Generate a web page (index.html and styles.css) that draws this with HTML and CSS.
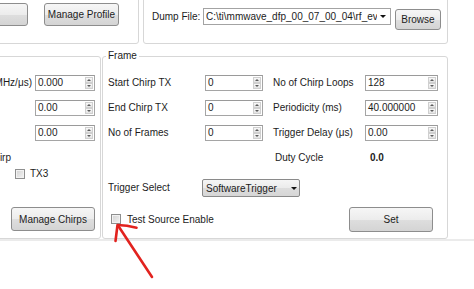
FILE: index.html
```html
<!DOCTYPE html>
<html>
<head>
<meta charset="utf-8">
<link rel="stylesheet" href="styles.css">
</head>
<body>
<div class="screen">
  <div class="top">
    <div class="group profile">
      <button class="btn btn-load">Load</button>
      <button class="btn btn-manage">Manage Profile</button>
    </div>
    <div class="group dump">
      <span class="dump-label">Dump File:</span>
      <div class="combo path"><span class="combo-text">C:\ti\mmwave_dfp_00_07_00_04\rf_ev</span><span class="caret"></span></div>
      <button class="btn btn-browse">Browse</button>
    </div>
  </div>

  <div class="main">
    <div class="panel chirp">
      <div class="spin-grid">
        <span class="lbl lbl-right">(MHz/μs)</span>
        <div class="spin"><span class="val">0.000</span><span class="arrows"><span class="up"></span><span class="dn"></span></span></div>
        <span class="lbl"></span>
        <div class="spin"><span class="val">0.00</span><span class="arrows"><span class="up"></span><span class="dn"></span></span></div>
        <span class="lbl"></span>
        <div class="spin"><span class="val">0.00</span><span class="arrows"><span class="up"></span><span class="dn"></span></span></div>
      </div>
      <div class="sub-head">Chirp</div>
      <div class="tx-row"><label class="check"><span class="box"></span>TX3</label></div>
      <div class="btn-row"><button class="btn btn-chirps">Manage Chirps</button></div>
    </div>

    <fieldset class="frame">
      <legend>Frame</legend>
      <div class="frame-grid">
        <span class="lbl">Start Chirp TX</span>
        <div class="spin"><span class="val">0</span><span class="arrows"><span class="up"></span><span class="dn"></span></span></div>
        <span class="lbl lbl2">No of Chirp Loops</span>
        <div class="spin"><span class="val">128</span><span class="arrows"><span class="up"></span><span class="dn"></span></span></div>

        <span class="lbl">End Chirp TX</span>
        <div class="spin"><span class="val">0</span><span class="arrows"><span class="up"></span><span class="dn"></span></span></div>
        <span class="lbl lbl2">Periodicity (ms)</span>
        <div class="spin"><span class="val">40.000000</span><span class="arrows"><span class="up"></span><span class="dn"></span></span></div>

        <span class="lbl">No of Frames</span>
        <div class="spin"><span class="val">0</span><span class="arrows"><span class="up"></span><span class="dn"></span></span></div>
        <span class="lbl lbl2">Trigger Delay (μs)</span>
        <div class="spin"><span class="val">0.00</span><span class="arrows"><span class="up"></span><span class="dn"></span></span></div>

        <span class="duty-lbl">Duty Cycle</span>
        <span class="duty-val">0.0</span>

        <span class="lbl trig-lbl">Trigger Select</span>
        <div class="select"><span>SoftwareTrigger</span><span class="caret"></span></div>

        <label class="check test"><span class="box"></span>Test Source Enable</label>
        <button class="btn btn-set">Set</button>
      </div>
    </fieldset>
  </div>

  <svg class="arrow" width="474" height="289" viewBox="0 0 474 289">
    <path d="M152 277 L119 227" stroke="#e2231f" stroke-width="2.6" stroke-linecap="round" fill="none"/>
    <path d="M115.5 241 L117.5 225 L127 225.8 L136.5 227.8" stroke="#e2231f" stroke-width="2.6" stroke-linecap="round" stroke-linejoin="round" fill="none"/>
  </svg>
</div>
</body>
</html>
```

FILE: styles.css
```css
html, body {
  margin: 0;
  padding: 0;
}

body {
  font-family: "Liberation Sans", Arial, sans-serif;
  font-size: 10px;
  color: #1c1c1c;
  background: #ffffff;
}

.screen {
  position: relative;
  width: 474px;
  height: 289px;
  overflow: hidden;
  background: #ffffff;
}

/* ---------- top row ---------- */
.top {
  display: flex;
  gap: 4px;
  margin-top: -20px;
  height: 64px;
}

.group {
  box-sizing: border-box;
  height: 64px;
  border: 1px solid #d7d7d7;
  border-radius: 3px;
  display: flex;
  align-items: flex-start;
}

.profile {
  width: 239px;
  margin-left: -100px;
  padding: 22px 0 0 15px;
  gap: 16px;
}

.dump {
  width: 305px;
  padding: 27px 0 0 8px;
}

.dump-label {
  width: 51px;
  line-height: 17px;
  white-space: nowrap;
}

.btn {
  box-sizing: border-box;
  font: inherit;
  color: #1c1c1c;
  border: 1px solid #8d8d8d;
  border-radius: 3px;
  background: linear-gradient(#f6f6f6 0%, #ececec 50%, #dedede 51%, #d4d4d4 100%);
  padding: 0;
  margin: 0;
  white-space: nowrap;
}

.btn-load { width: 112px; height: 23px; }
.btn-manage { width: 75px; height: 23px; }
.btn-browse { width: 46px; height: 21px; margin-top: 1px; margin-left: 4px; }

.combo {
  box-sizing: border-box;
  height: 17px;
  border: 1px solid #a3a3a3;
  background: #ffffff;
  display: flex;
  align-items: center;
}

.path {
  width: 188px;
  padding: 0 4px 0 2px;
}

.combo-text {
  flex: 1;
  overflow: hidden;
  white-space: nowrap;
  line-height: 15px;
}

.caret {
  flex: none;
  width: 0;
  height: 0;
  margin-left: 3px;
  border-left: 3px solid transparent;
  border-right: 3px solid transparent;
  border-top: 3px solid #111111;
}

/* ---------- main area ---------- */
.main {
  display: flex;
  gap: 1px;
  margin-top: 12px;
  height: 183px;
  border-bottom: 2px solid #ebebeb;
}

.panel,
.frame {
  box-sizing: border-box;
  border: 1px solid #d7d7d7;
  border-radius: 3px;
}

.chirp {
  width: 151px;
  height: 183px;
  margin-left: -50px;
  padding: 18px 5px 0 9px;
  display: flex;
  flex-direction: column;
}

.spin-grid {
  display: grid;
  grid-template-columns: 75px 60px;
  grid-template-rows: 16px 16px 16px;
  row-gap: 9px;
}

.lbl {
  line-height: 16px;
  white-space: nowrap;
}

.lbl-right {
  text-align: right;
  padding-right: 3px;
}

.sub-head {
  width: 51px;
  margin-top: 9px;
  line-height: 16px;
  text-align: right;
  white-space: nowrap;
}

.tx-row {
  height: 15px;
  display: flex;
  align-items: center;
  padding-left: 55px;
}

.btn-row {
  margin-top: 26px;
  display: flex;
  justify-content: flex-end;
}

.btn-chirps { width: 84px; height: 24px; }

.check {
  display: flex;
  align-items: center;
  gap: 5px;
  white-space: nowrap;
}

.box {
  box-sizing: border-box;
  width: 10px;
  height: 10px;
  border: 1px solid #8e8f8f;
  background: linear-gradient(135deg, #d2d2d2 0%, #e6e6e6 60%, #f4f4f4 100%);
  box-shadow: inset 0 0 0 1px #f2f2f2;
}

/* spin boxes */
.spin {
  box-sizing: border-box;
  height: 16px;
  border: 1px solid #a5a5a5;
  border-top-color: #9a9a9a;
  background: #ffffff;
  display: flex;
}

.val {
  flex: 1;
  padding-left: 2px;
  line-height: 14px;
  white-space: nowrap;
  overflow: hidden;
}

.arrows {
  width: 8px;
  margin: 1px 1px 1px 0;
  display: flex;
  flex-direction: column;
}

.arrows span {
  flex: 1;
  box-sizing: border-box;
  border: 1px solid #cfcfcf;
  background: linear-gradient(#f8f8f8, #e3e3e3);
  display: flex;
  align-items: center;
  justify-content: center;
}

.up::after,
.dn::after {
  content: "";
  width: 0;
  height: 0;
  border-left: 2px solid transparent;
  border-right: 2px solid transparent;
}

.up::after { border-bottom: 2px solid #5c5c5c; }
.dn::after { border-top: 2px solid #5c5c5c; }

/* ---------- frame ---------- */
.frame {
  width: 346px;
  height: 189px;
  margin: -6px 0 0 0;
  padding: 13px 9px 0 5px;
  min-width: 0;
}

.frame legend {
  font-size: 10px;
  line-height: 12px;
  padding: 0 2px;
  margin-left: -2px;
}

.frame-grid {
  display: grid;
  grid-template-columns: 97px 58px 102px 73px;
  grid-template-rows: 16px 16px 16px 20px 18px 26px;
  row-gap: 9px;
}

.lbl2 {
  padding-left: 10px;
}

.duty-lbl {
  grid-column: 3;
  padding-left: 12px;
  line-height: 16px;
}

.duty-val {
  grid-column: 4;
  padding-left: 5px;
  line-height: 16px;
  font-weight: bold;
}

.trig-lbl {
  grid-column: 1;
  line-height: 18px;
}

.select {
  grid-column: 2 / span 2;
  box-sizing: border-box;
  width: 98px;
  height: 18px;
  margin-left: -3px;
  border: 1px solid #8a8a8a;
  border-radius: 2px;
  background: linear-gradient(#f5f5f5 0%, #ebebeb 50%, #dddddd 51%, #d6d6d6 100%);
  display: flex;
  align-items: center;
  justify-content: space-between;
  padding: 0 2px 0 3px;
  white-space: nowrap;
}

.test {
  grid-column: 1 / span 2;
  margin-left: 3px;
  gap: 6px;
}

.btn-set {
  grid-column: 3 / span 2;
  justify-self: end;
  align-self: start;
  width: 84px;
  height: 25px;
  margin: 1px 5px 0 0;
}

/* annotation arrow overlay */
.arrow {
  position: absolute;
  left: 0;
  top: 0;
  pointer-events: none;
}
```
